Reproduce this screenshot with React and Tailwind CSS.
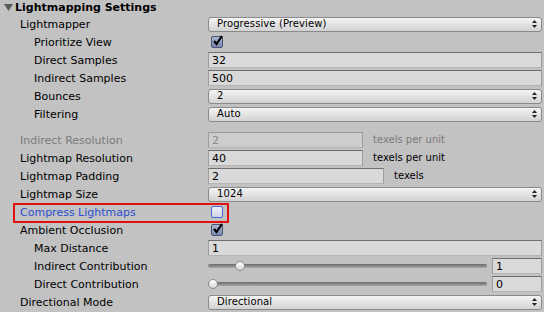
import React from "react";

const FONT = { fontFamily: '"DejaVu Sans", Verdana, sans-serif' };

function Arrows() {
  return (
    <svg width="5" height="8" viewBox="0 0 5 8" className="shrink-0">
      <path d="M2.5 0 L5 3 L0 3 Z" fill="#222" />
      <path d="M2.5 8 L5 5 L0 5 Z" fill="#222" />
    </svg>
  );
}

function Dropdown({ value }) {
  return (
    <div className="h-[15px] w-full flex items-center justify-between pl-[8px] pr-[4px] rounded-[3px] border border-[#8a8a8a] bg-gradient-to-b from-[#f4f4f4] to-[#d2d2d2] text-[10px] leading-none text-black tracking-[0.1px]">
      <span>{value}</span>
      <Arrows />
    </div>
  );
}

function Field({ value, w, disabled }) {
  return (
    <div
      className={
        "h-[16px] flex items-center pl-[3px] text-[11px] leading-none border border-t-[#6f6f6f] border-x-[#9d9d9d] border-b-[#b4b4b4] " +
        (disabled ? "bg-[#cdcdcd] text-[#8a8a8a] border-t-[#9a9a9a]" : "bg-[#d9d9d9] text-black") +
        " " +
        (w || "w-full")
      }
    >
      {value}
    </div>
  );
}

function Check({ checked }) {
  if (!checked) {
    return (
      <div className="w-[12px] h-[12px] rounded-[2px] border border-[#4c68d6] bg-gradient-to-b from-[#eef0f8] to-[#cfd4e4]" />
    );
  }
  return (
    <div className="relative w-[12px] h-[12px] rounded-[2px] border border-[#4a5470] bg-gradient-to-b from-[#a9b6d2] to-[#7688b0]">
      <svg width="12" height="12" viewBox="0 0 12 12" className="absolute left-[0px] top-[-2px]">
        <path d="M2 6 L4.5 9 L10 1" stroke="#000" strokeWidth="2.2" fill="none" strokeLinejoin="miter" />
      </svg>
    </div>
  );
}

function Slider({ frac, value }) {
  const thumbW = 10;
  return (
    <div className="flex items-center w-full gap-[5px]">
      <div className="relative flex-1 h-[12px] flex items-center">
        <div className="w-full h-[4px] rounded-full bg-gradient-to-b from-[#6a6a6a] to-[#a8a8a8]" />
        <div
          className="absolute top-[1px] w-[10px] h-[10px] rounded-full border border-[#8a8a8a] bg-gradient-to-b from-[#ffffff] to-[#d6d6d6]"
          style={{ left: `calc(${frac} * (100% - ${thumbW}px))` }}
        />
      </div>
      <Field value={value} w="w-[50px]" />
    </div>
  );
}

function Row({ label, indent, children, labelClass, top, extra }) {
  return (
    <div className={"relative h-[18px] flex items-center " + (top || "")}>
      <div
        className={
          "w-[208px] shrink-0 text-[11px] leading-none " +
          (indent ? "pl-[34px] " : "pl-[20px] ") +
          (labelClass || "text-black")
        }
      >
        {label}
      </div>
      <div className="flex-1 pr-[2px] flex items-center">{children}</div>
      {extra}
    </div>
  );
}

export default function App() {
  return (
    <div className="w-[544px] h-[312px] bg-[#c2c2c2] overflow-hidden" style={FONT}>
      <div className="h-[15px] flex items-center pl-[4px]">
        <svg width="9" height="8" viewBox="0 0 9 8" className="mr-[2px]">
          <path d="M0 0 L9 0 L4.5 7 Z" fill="#5a5a5a" />
        </svg>
        <span className="text-[11px] font-bold leading-none text-black">
          Lightmapping Settings
        </span>
      </div>

      <Row label="Lightmapper">
        <Dropdown value="Progressive (Preview)" />
      </Row>
      <Row label="Prioritize View" indent>
        <div className="pl-[3px]">
          <Check checked />
        </div>
      </Row>
      <Row label="Direct Samples" indent>
        <Field value="32" />
      </Row>
      <Row label="Indirect Samples" indent>
        <Field value="500" />
      </Row>
      <Row label="Bounces" indent>
        <Dropdown value="2" />
      </Row>
      <Row label="Filtering" indent>
        <Dropdown value="Auto" />
      </Row>

      <Row label="Indirect Resolution" labelClass="text-[#7a7a7a]" top="mt-[8px]">
        <Field value="2" w="w-[155px]" disabled />
        <span className="ml-[10px] text-[10px] leading-none text-[#7a7a7a]">texels per unit</span>
      </Row>
      <Row label="Lightmap Resolution">
        <Field value="40" w="w-[155px]" />
        <span className="ml-[10px] text-[10px] leading-none text-black">texels per unit</span>
      </Row>
      <Row label="Lightmap Padding">
        <Field value="2" w="w-[176px]" />
        <span className="ml-[10px] text-[10px] leading-none text-black">texels</span>
      </Row>
      <Row label="Lightmap Size">
        <Dropdown value="1024" />
      </Row>
      <Row
        label="Compress Lightmaps"
        labelClass="text-[#2a4fd0]"
        extra={
          <div className="absolute left-[13px] top-[0px] w-[216px] h-[20px] border-2 border-[#e01010] pointer-events-none" />
        }
      >
        <div className="pl-[3px]">
          <Check />
        </div>
      </Row>
      <Row label="Ambient Occlusion">
        <div className="pl-[3px]">
          <Check checked />
        </div>
      </Row>
      <Row label="Max Distance" indent>
        <Field value="1" />
      </Row>
      <Row label="Indirect Contribution" indent>
        <Slider frac={0.1} value="1" />
      </Row>
      <Row label="Direct Contribution" indent>
        <Slider frac={0} value="0" />
      </Row>
      <Row label="Directional Mode">
        <Dropdown value="Directional" />
      </Row>
    </div>
  );
}
